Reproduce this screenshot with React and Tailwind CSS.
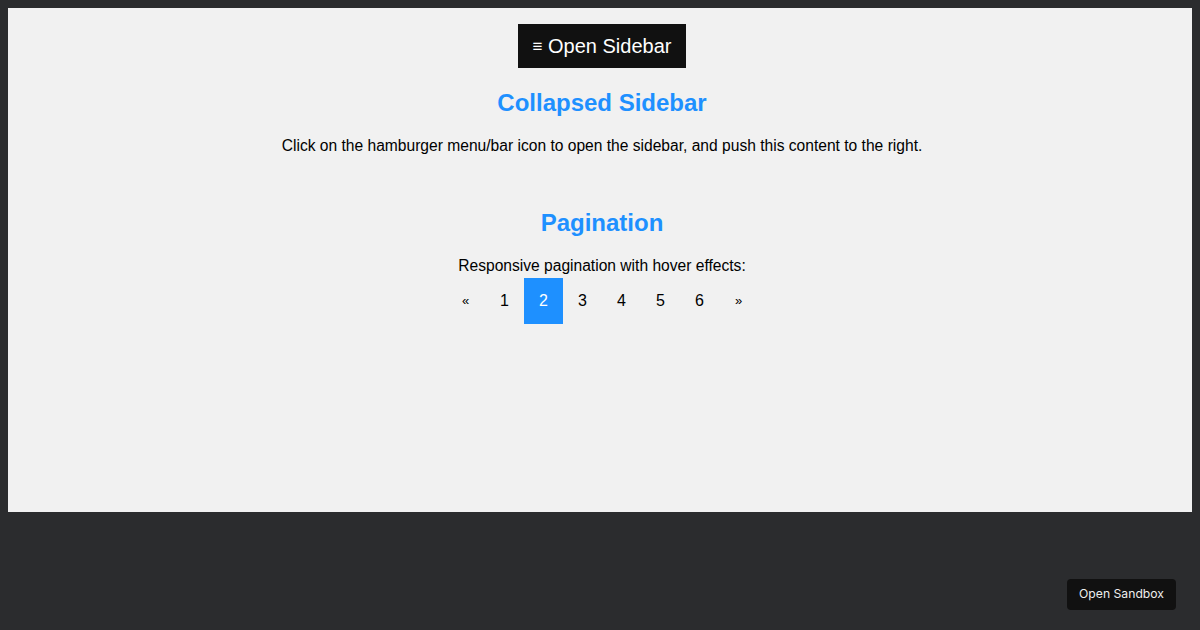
export default function App() {
  const pages = ["«", "1", "2", "3", "4", "5", "6", "»"];
  return (
    <div className="w-[1200px] h-[630px] bg-[#2b2c2e] flex flex-col overflow-hidden" style={{ fontFamily: '"Liberation Sans", Arial, sans-serif' }}>
      <div className="mx-2 mt-2 h-[504px] bg-[#f1f1f1] flex flex-col items-center pt-4 pl-[4px] text-black">
        <button className="h-[44px] px-[15px] bg-[#111111] text-white text-[20px] leading-none flex items-center whitespace-pre">
          <span className="text-[17px] font-bold">≡</span>
          {" Open Sidebar"}
        </button>
        <h2 className="mt-[21px] h-[28px] leading-[28px] text-[24px] font-bold text-[#1e90ff]">Collapsed Sidebar</h2>
        <p className="mt-[19px] h-[20px] leading-[20px] text-[15.6px]">Click on the hamburger menu/bar icon to open the sidebar, and push this content to the right.</p>
        <h2 className="mt-[53px] h-[28px] leading-[28px] text-[24px] font-bold text-[#1e90ff]">Pagination</h2>
        <p className="mt-[19px] h-[20px] leading-[20px] text-[15.6px]">Responsive pagination with hover effects:</p>
        <div className="mt-[2px] flex">
          {pages.map((p, i) => (
            <div
              key={i}
              className={
                p === "2"
                  ? "w-[39px] h-[46px] flex items-center justify-center text-[16px] bg-[#1e90ff] text-white"
                  : p === "«" || p === "»"
                  ? "w-[39px] h-[46px] flex items-center justify-center text-[13px] text-black"
                  : "w-[39px] h-[46px] flex items-center justify-center text-[16px] text-black"
              }
            >
              {p}
            </div>
          ))}
        </div>
      </div>
      <div className="flex-1 flex items-end justify-end pr-[24px] pb-[20px]">
        <button className="h-[31px] px-[12px] rounded-[4px] bg-[#111111] text-[#eeeeee] text-[12.2px]" style={{ fontFamily: 'Inter, "Noto Sans", sans-serif' }}>
          Open Sandbox
        </button>
      </div>
    </div>
  );
}
